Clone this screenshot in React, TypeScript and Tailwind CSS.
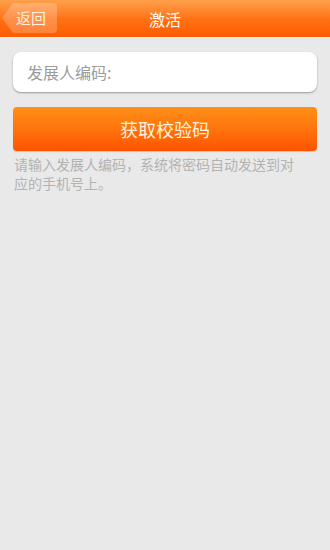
import React from "react";

const font = { fontFamily: '"Noto Sans CJK SC", "Noto Sans", sans-serif' };

export default function App() {
  return (
    <div className="w-[330px] h-[550px] bg-[#e9e9e9] flex flex-col" style={font}>
      {/* header */}
      <div className="relative h-[37px] bg-gradient-to-b from-[#ffa04a] via-[#ff7314] to-[#ff5a00] flex items-center justify-center shadow-[0_1px_0_#f3f3f3]">
        <div className="absolute left-[2px] top-[3px] flex items-center">
          <svg width="11" height="30" viewBox="0 0 11 30">
            <path d="M11 0 L0 15 L11 30 Z" fill="rgba(255,255,255,0.22)" />
          </svg>
          <div className="h-[30px] w-[44px] bg-white/[0.22] rounded-r-[4px] flex items-center text-[15px] text-[#fff1df] pl-[3px]">
            返回
          </div>
        </div>
        <span className="text-[16px] text-white">激活</span>
      </div>

      <div className="px-[13px] pt-[15px] flex flex-col">
        {/* input */}
        <div className="h-[40px] bg-white rounded-[8px] shadow-[0_1px_2px_rgba(0,0,0,0.35)] flex items-center px-[14px]">
          <span className="text-[16px] text-[#9b9b9b]">发展人编码:</span>
        </div>

        {/* button */}
        <button className="mt-[15px] h-[44px] w-[304px] rounded-[4px] bg-gradient-to-b from-[#ff9018] to-[#ff5200] shadow-[0_1px_1px_rgba(0,0,0,0.15)] flex items-center justify-center text-[18px] text-[#fff3de]">
          获取校验码
        </button>

        {/* hint */}
        <p className="mt-[4px] text-[14px] leading-[19px] text-[#b3b3b3] pl-[1px] pr-[10px]">
          请输入发展人编码，系统将密码自动发送到对应的手机号上。
        </p>
      </div>
    </div>
  );
}
